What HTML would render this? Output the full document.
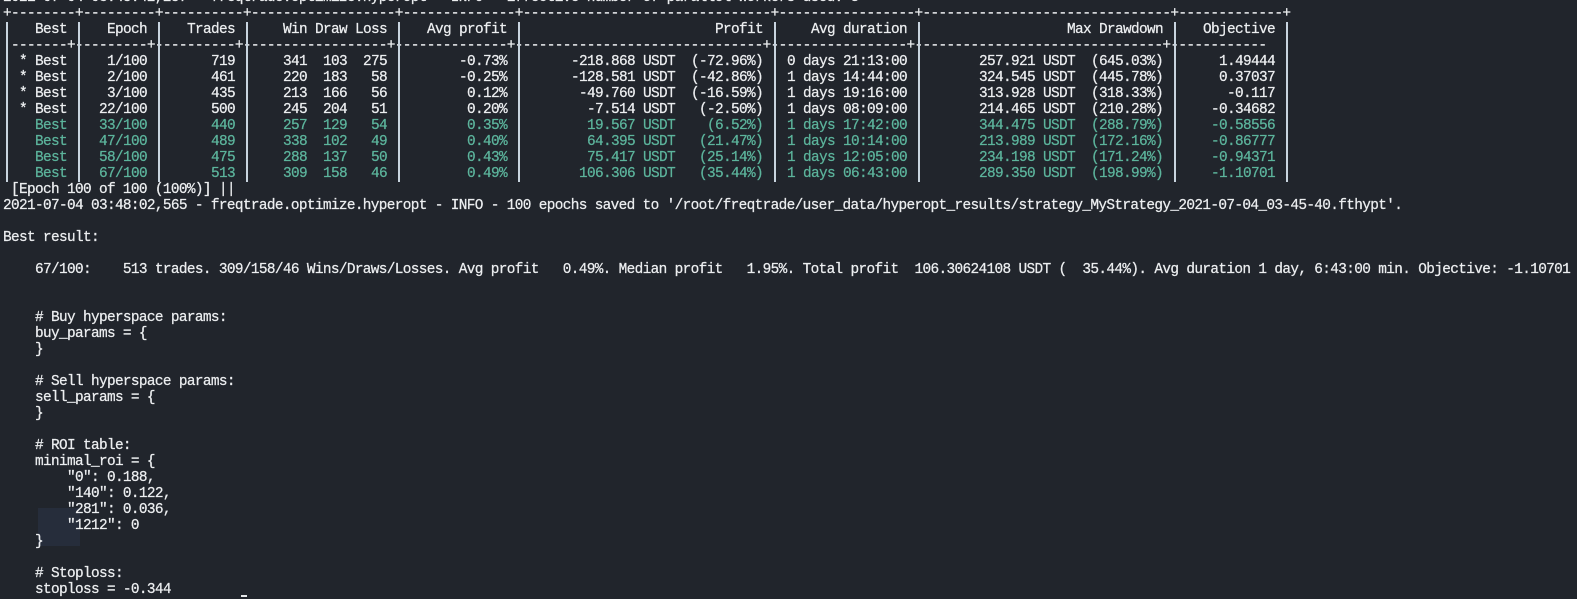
<!DOCTYPE html>
<html><head><meta charset="utf-8"><style>
html,body{margin:0;padding:0;background:#21252c;width:1577px;height:599px;overflow:hidden}
body{font-family:"Liberation Mono",monospace;font-size:14.4px;letter-spacing:-0.64px;color:#eceef0;position:relative;-webkit-text-stroke:0.25px currentColor}
#w{position:absolute;left:0;top:1px;width:1577px;height:599px}
.ln{position:absolute;left:3px;height:16px;line-height:16px;white-space:pre}
.row{position:absolute;left:0;width:1577px;height:16px;line-height:16px}
.row span{position:absolute;top:0;width:200px;text-align:right;white-space:pre}
.g{color:#5cb49c}
.a{left:-133px}.b{left:-53px}.c{left:35px}.d{left:107px}.e{left:147px}.f{left:187px}
.p{left:307px}.h{left:435px}.row .u1{left:643px;text-align:left}.i{left:563px}
.row .j{left:787px;text-align:left}.k{left:835px}.row .u2{left:1043px;text-align:left}.l{left:963px}.m{left:1075px}
.bar{position:absolute;top:21px;height:160px;width:1.5px;background:#c8d4df}
</style></head><body><div id="w">
<div class="ln" style="top:-11px">2021-07-04 03:45:42,257 - freqtrade.optimize.hyperopt - INFO - Effective number of parallel workers used: 8</div>
<div class="ln" style="top:5px">+--------+---------+----------+------------------+--------------+-------------------------------+-----------------+-------------------------------+-------------+</div>
<div class="ln" style="top:37px"> -------+---------+----------+------------------+--------------+-------------------------------+-----------------+-------------------------------+------------ </div>

<div class="row" style="top:21px"><span class="a">Best</span><span class="b">Epoch</span><span class="c">Trades</span><span class="d" style="left:187px">Win Draw Loss</span><span class="p">Avg profit</span><span class="i">Profit</span><span class="j" style="left:811px">Avg duration</span><span class="l">Max Drawdown</span><span class="m">Objective</span></div>

<div class="row" style="top:53px"><span class="a">* Best</span><span class="b">1/100</span><span class="c">719</span><span class="d">341</span><span class="e">103</span><span class="f">275</span><span class="p">-0.73%</span><span class="h">-218.868</span><span class="u1">USDT</span><span class="i">(-72.96%)</span><span class="j">0 days 21:13:00</span><span class="k">257.921</span><span class="u2">USDT</span><span class="l">(645.03%)</span><span class="m">1.49444</span></div>
<div class="row" style="top:69px"><span class="a">* Best</span><span class="b">2/100</span><span class="c">461</span><span class="d">220</span><span class="e">183</span><span class="f">58</span><span class="p">-0.25%</span><span class="h">-128.581</span><span class="u1">USDT</span><span class="i">(-42.86%)</span><span class="j">1 days 14:44:00</span><span class="k">324.545</span><span class="u2">USDT</span><span class="l">(445.78%)</span><span class="m">0.37037</span></div>
<div class="row" style="top:85px"><span class="a">* Best</span><span class="b">3/100</span><span class="c">435</span><span class="d">213</span><span class="e">166</span><span class="f">56</span><span class="p">0.12%</span><span class="h">-49.760</span><span class="u1">USDT</span><span class="i">(-16.59%)</span><span class="j">1 days 19:16:00</span><span class="k">313.928</span><span class="u2">USDT</span><span class="l">(318.33%)</span><span class="m">-0.117</span></div>
<div class="row" style="top:101px"><span class="a">* Best</span><span class="b">22/100</span><span class="c">500</span><span class="d">245</span><span class="e">204</span><span class="f">51</span><span class="p">0.20%</span><span class="h">-7.514</span><span class="u1">USDT</span><span class="i">(-2.50%)</span><span class="j">1 days 08:09:00</span><span class="k">214.465</span><span class="u2">USDT</span><span class="l">(210.28%)</span><span class="m">-0.34682</span></div>
<div class="row g" style="top:117px"><span class="a">Best</span><span class="b">33/100</span><span class="c">440</span><span class="d">257</span><span class="e">129</span><span class="f">54</span><span class="p">0.35%</span><span class="h">19.567</span><span class="u1">USDT</span><span class="i">(6.52%)</span><span class="j">1 days 17:42:00</span><span class="k">344.475</span><span class="u2">USDT</span><span class="l">(288.79%)</span><span class="m">-0.58556</span></div>
<div class="row g" style="top:133px"><span class="a">Best</span><span class="b">47/100</span><span class="c">489</span><span class="d">338</span><span class="e">102</span><span class="f">49</span><span class="p">0.40%</span><span class="h">64.395</span><span class="u1">USDT</span><span class="i">(21.47%)</span><span class="j">1 days 10:14:00</span><span class="k">213.989</span><span class="u2">USDT</span><span class="l">(172.16%)</span><span class="m">-0.86777</span></div>
<div class="row g" style="top:149px"><span class="a">Best</span><span class="b">58/100</span><span class="c">475</span><span class="d">288</span><span class="e">137</span><span class="f">50</span><span class="p">0.43%</span><span class="h">75.417</span><span class="u1">USDT</span><span class="i">(25.14%)</span><span class="j">1 days 12:05:00</span><span class="k">234.198</span><span class="u2">USDT</span><span class="l">(171.24%)</span><span class="m">-0.94371</span></div>
<div class="row g" style="top:165px"><span class="a">Best</span><span class="b">67/100</span><span class="c">513</span><span class="d">309</span><span class="e">158</span><span class="f">46</span><span class="p">0.49%</span><span class="h">106.306</span><span class="u1">USDT</span><span class="i">(35.44%)</span><span class="j">1 days 06:43:00</span><span class="k">289.350</span><span class="u2">USDT</span><span class="l">(198.99%)</span><span class="m">-1.10701</span></div>

<div class="bar" style="left:6px"></div><div class="bar" style="left:78px"></div><div class="bar" style="left:158px"></div><div class="bar" style="left:246px"></div><div class="bar" style="left:398px"></div><div class="bar" style="left:518px"></div><div class="bar" style="left:774px"></div><div class="bar" style="left:918px"></div><div class="bar" style="left:1174px"></div><div class="bar" style="left:1286px"></div>

<div class="ln" style="top:181px"> [Epoch 100 of 100 (100%)] ||</div>
<div class="ln" style="top:197px">2021-07-04 03:48:02,565 - freqtrade.optimize.hyperopt - INFO - 100 epochs saved to '/root/freqtrade/user_data/hyperopt_results/strategy_MyStrategy_2021-07-04_03-45-40.fthypt'.</div>
<div class="ln" style="top:229px">Best result:</div>
<div class="ln" style="top:261px">    67/100:    513 trades. 309/158/46 Wins/Draws/Losses. Avg profit   0.49%. Median profit   1.95%. Total profit  106.30624108 USDT (  35.44%). Avg duration 1 day, 6:43:00 min. Objective: -1.10701</div>
<div style="position:absolute;left:38px;top:507px;width:42px;height:38px;background:#262d3b"></div>
<div class="ln" style="top:309px">    # Buy hyperspace params:</div>
<div class="ln" style="top:325px">    buy_params = {</div>
<div class="ln" style="top:341px">    }</div>
<div class="ln" style="top:373px">    # Sell hyperspace params:</div>
<div class="ln" style="top:389px">    sell_params = {</div>
<div class="ln" style="top:405px">    }</div>
<div class="ln" style="top:437px">    # ROI table:</div>
<div class="ln" style="top:453px">    minimal_roi = {</div>
<div class="ln" style="top:469px">        "0": 0.188,</div>
<div class="ln" style="top:485px">        "140": 0.122,</div>
<div class="ln" style="top:501px">        "281": 0.036,</div>
<div class="ln" style="top:517px">        "1212": 0</div>
<div class="ln" style="top:533px">    }</div>
<div class="ln" style="top:565px">    # Stoploss:</div>
<div class="ln" style="top:581px">    stoploss = -0.344</div>
<div style="position:absolute;left:241px;top:594px;width:6px;height:2px;background:#e6e8ea"></div>
</div></body></html>
